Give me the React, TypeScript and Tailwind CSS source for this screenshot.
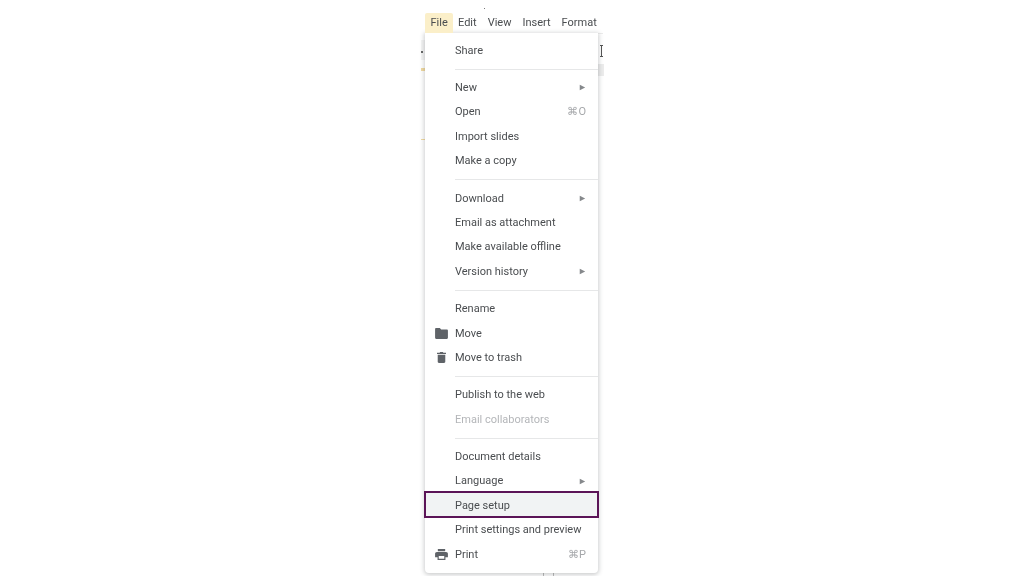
import { ReactNode } from "react";

type Item = {
  label: string;
  icon?: ReactNode;
  shortcut?: string;
  arrow?: boolean;
  disabled?: boolean;
  active?: boolean;
};

const FolderIcon = () => (
  <svg viewBox="0 0 14 12" className="w-[13px] h-[11px] fill-[#5f6368]">
    <path d="M1.2 0h4l1.4 1.6h6.2c.7 0 1.2.5 1.2 1.2v7.9c0 .7-.5 1.3-1.2 1.3H1.2C.5 12 0 11.4 0 10.700V1.300C0 .6.5 0 1.200 0z" />
  </svg>
);

const TrashIcon = () => (
  <svg viewBox="0 0 10 12" className="w-[9px] h-[11px] fill-[#5f6368]">
    <path d="M3.500 0h3l.6.7H10V2H0V.7h2.900zM.8 3h8.400v7.700c0 .7-.6 1.300-1.300 1.300H2.100c-.7 0-1.300-.6-1.300-1.300z" />
  </svg>
);

const PrintIcon = () => (
  <svg viewBox="0 0 14 12" className="w-[13px] h-[11px] fill-[#5f6368]">
    <path d="M3 0h8v2.500H3zM2 3.200h10c1.100 0 2 .9 2 2V9h-2.700v3H2.700V9H0V5.200c0-1.100.9-2 2-2zm2 4.300V10.700h6V7.500z" />
  </svg>
);

// what shows of the document around the menu: ruler ticks, scrollbar, text cursor
const DocumentBits = () => (
  <svg viewBox="0 0 1024 576" className="absolute inset-0 h-[576px] w-[1024px]">
    <rect x="484" y="8" width="1" height="1" fill="#777" />
    <rect x="421" y="40" width="4" height="20" fill="#f4f4f4" />
    <rect x="421" y="51" width="2" height="2" fill="#666" />
    <rect x="421" y="68" width="4" height="3" fill="#f0d9a0" />
    <rect x="421" y="139" width="4" height="1" fill="#f0d9a0" />
    <rect x="453" y="33" width="150" height="1" fill="#ececec" />
    <rect x="598" y="64" width="6" height="12" fill="#ececec" />
    <path d="M600 45.500h3M600 56.500h3M601.500 45v12" stroke="#555" fill="none" />
    <path d="M543.500 570v6M553.500 570v6" stroke="#bbb" fill="none" />
  </svg>
);

const groups: Item[][] = [
  [{ label: "Share" }],
  [
    { label: "New", arrow: true },
    { label: "Open", shortcut: "⌘O" },
    { label: "Import slides" },
    { label: "Make a copy" },
  ],
  [
    { label: "Download", arrow: true },
    { label: "Email as attachment" },
    { label: "Make available offline" },
    { label: "Version history", arrow: true },
  ],
  [
    { label: "Rename" },
    { label: "Move", icon: <FolderIcon /> },
    { label: "Move to trash", icon: <TrashIcon /> },
  ],
  [{ label: "Publish to the web" }, { label: "Email collaborators", disabled: true }],
  [
    { label: "Document details" },
    { label: "Language", arrow: true },
    { label: "Page setup", active: true },
    { label: "Print settings and preview" },
    { label: "Print", icon: <PrintIcon />, shortcut: "⌘P" },
  ],
];

const MenuRow = ({ item }: { item: Item }) => (
  <div
    className={`flex h-[24.4px] items-center whitespace-nowrap pr-3 ${
      item.disabled ? "text-[#b4b6b9]" : "text-[#4a4d50]"
    } ${item.active ? "-mt-[1px] mb-[1px] bg-[#f1f3f4] pt-[2px] outline-2 -outline-offset-1 outline-[#5b1457]" : ""}`}
  >
    <div className="flex w-[30px] shrink-0 justify-center pl-[3px]">{item.icon}</div>
    <span className="flex-1 pt-[1px]">{item.label}</span>
    {item.shortcut && <span className="pt-[1px] text-[#a6a8ab]">{item.shortcut}</span>}
    {item.arrow && <span className="-mr-[1px] text-[9px] leading-none text-[#85888b]">►</span>}
  </div>
);

export default function App() {
  return (
    <div className="relative h-[576px] w-[1024px] overflow-hidden bg-white font-['Roboto',sans-serif] text-[11px] blur-[0.6px]">
      <DocumentBits />

      <div className="relative ml-[425px] w-[173px] pt-[13px]">
        <div className="flex h-[20px] items-center whitespace-nowrap text-[#4a4d50]">
          <span className="flex h-[20px] w-[28px] items-center rounded-t-[2px] bg-[#fbefc9] pl-[5.5px] pt-[1px]">File</span>
          <div className="ml-[5px] flex gap-[11px] pt-[1px]">
            <span>Edit</span>
            <span>View</span>
            <span>Insert</span>
            <span>Format</span>
          </div>
        </div>
        <div className="rounded-b-[4px] bg-white pt-[5.200px] pb-[6px] shadow-[0_1px_4px_1px_rgba(60,64,67,0.25)]">
          {groups.map((group, i) => (
            <div key={i}>
              {i > 0 && <div className="my-[6px] ml-[30px] h-[1px] bg-[#e6e7e8]" />}
              {group.map((item) => (
                <MenuRow key={item.label} item={item} />
              ))}
            </div>
          ))}
        </div>
      </div>
    </div>
  );
}
